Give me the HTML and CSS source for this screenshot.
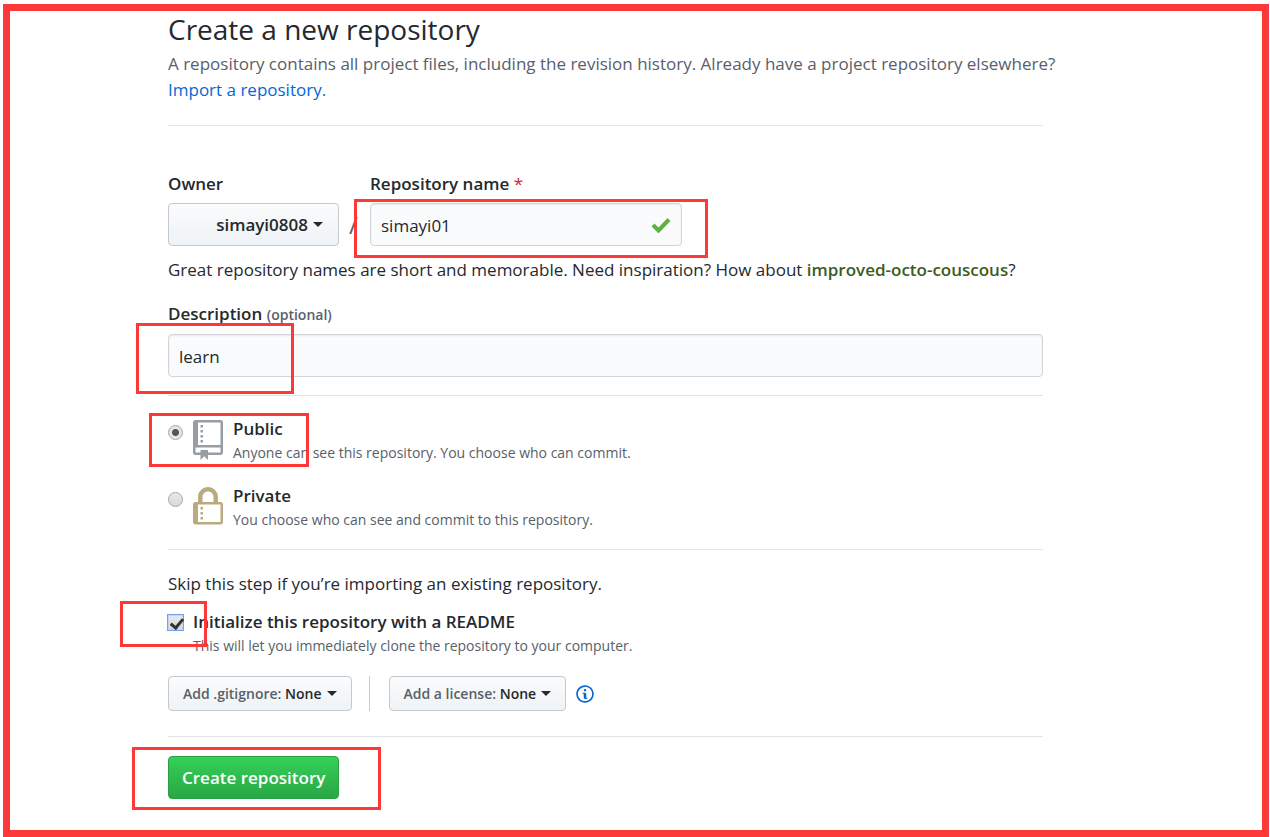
FILE: index.html
```html
<!DOCTYPE html>
<html lang="en">
<head>
	<meta charset="utf-8">
	<title>Create a New Repository</title>
	<link rel="stylesheet" href="styles.css">
</head>
<body>
<div class="frame">
	<main class="content">
		<header class="subhead">
			<h1>Create a new repository</h1>
			<p>A repository contains all project files, including the revision history. Already have a project repository elsewhere? <a href="#">Import a repository.</a></p>
		</header>

		<form>
			<div class="name-row">
				<div class="field">
					<label for="owner">Owner</label>
					<button type="button" id="owner" class="btn btn-owner" aria-haspopup="true">simayi0808<span class="caret"></span></button>
				</div>
				<span class="slash">/</span>
				<div class="field">
					<label for="repo-name">Repository name <span class="required">*</span></label>
					<div class="control">
						<input type="text" id="repo-name" class="name-input" value="simayi01">
						<svg class="check" viewBox="0 0 20 16" width="20" height="16"><path d="M2 8l5.500 5.500L18 2.500" fill="none" stroke="#5eb13c" stroke-width="4"/></svg>
						<span class="mark mark-name"></span>
					</div>
				</div>
			</div>
			<p class="note">Great repository names are short and memorable. Need inspiration? How about <strong>improved-octo-couscous</strong>?</p>

			<div class="field description">
				<label for="description">Description <span class="optional">(optional)</span></label>
				<div class="control">
					<input type="text" id="description" value="learn">
					<span class="mark mark-description"></span>
				</div>
			</div>

			<div class="section visibility">
				<div class="choice">
					<input type="radio" name="visibility" id="public" checked>
					<svg class="icon-repo" viewBox="0 0 12 16" width="30" height="40"><path fill-rule="evenodd" d="M4 9H3V8h1v1zm0-3H3v1h1V6zm0-2H3v1h1V4zm0-2H3v1h1V2zm8-1v12c0 .55-.45 1-1 1H6v2l-1.500-1.500L3 16v-2H1c-.55 0-1-.45-1-1V1c0-.55.45-1 1-1h10c.55 0 1 .45 1 1zm-1 10H1v2h2v-1h3v1h5v-2zm0-10H2v9h9V1z"/></svg>
					<div>
						<label for="public">Public</label>
						<p class="hint">Anyone can see this repository. You choose who can commit.</p>
					</div>
					<span class="mark mark-public"></span>
				</div>
				<div class="choice">
					<input type="radio" name="visibility" id="private">
					<svg class="icon-lock" viewBox="0 0 12 16" width="30" height="40"><path fill-rule="evenodd" d="M4 13H3v-1h1v1zm8-6v7c0 .55-.45 1-1 1H1c-.55 0-1-.45-1-1V7c0-.55.45-1 1-1h1V4c0-2.200 1.800-4 4-4s4 1.800 4 4v2h1c.55 0 1 .45 1 1zM3.800 6h4.410V4c0-1.220-.98-2.200-2.200-2.200-1.220 0-2.200.98-2.200 2.200v2H3.800zM11 7H2v7h9V7zM4 8H3v1h1V8zm0 2H3v1h1v-1z"/></svg>
					<div>
						<label for="private">Private</label>
						<p class="hint">You choose who can see and commit to this repository.</p>
					</div>
				</div>
			</div>

			<div class="section init">
				<p>Skip this step if you’re importing an existing repository.</p>
				<div class="choice">
					<input type="checkbox" id="readme" checked>
					<div>
						<label for="readme">Initialize this repository with a README</label>
						<p class="hint">This will let you immediately clone the repository to your computer.</p>
					</div>
					<span class="mark mark-readme"></span>
				</div>
				<div class="templates">
					<button type="button" class="btn btn-sm" aria-haspopup="true"><i>Add .gitignore:</i> None<span class="caret"></span></button>
					<span class="divider"></span>
					<button type="button" class="btn btn-sm" aria-haspopup="true"><i>Add a license:</i> None<span class="caret"></span></button>
					<a href="#" class="info" aria-label="About licenses"><svg viewBox="0 0 14 16" width="18" height="20"><path fill-rule="evenodd" d="M6.300 5.690a.942.942 0 0 1-.28-.7c0-.28.09-.52.28-.7.19-.18.42-.28.7-.28.28 0 .52.09.7.28.18.19.28.42.28.7 0 .28-.09.52-.28.7a1 1 0 0 1-.7.3c-.28 0-.52-.11-.7-.3zM8 7.990c-.02-.25-.11-.48-.31-.69-.2-.19-.42-.3-.69-.31H6c-.27.02-.48.13-.69.31-.2.2-.3.44-.31.69h1v3c.02.27.11.5.31.69.2.2.42.31.69.31h1c.27 0 .48-.11.69-.31.2-.19.3-.42.31-.69H8V7.980v.01zM7 2.300c-3.140 0-5.700 2.540-5.700 5.680 0 3.140 2.560 5.700 5.700 5.700s5.700-2.550 5.700-5.700c0-3.150-2.560-5.690-5.700-5.690v.01zM7 .98c3.860 0 7 3.140 7 7s-3.140 7-7 7-7-3.120-7-7 3.140-7 7-7z"/></svg></a>
				</div>
			</div>

			<div class="section submit">
				<div class="control">
					<button type="submit" class="btn btn-primary">Create repository</button>
					<span class="mark mark-submit"></span>
				</div>
			</div>
		</form>
	</main>
</div>
</body>
</html>
```
FILE: styles.css
```css
* { box-sizing: border-box; }
body {
	margin: 0; background: white;
	font: 17px/26px "Segoe UI", "Open Sans", "Noto Sans", sans-serif;
	color: #24292e;
}
h1, p { margin: 0; }
h1 { font-size: 28px; line-height: 36px; font-weight: 400; }
a { color: #0366d6; text-decoration: none; }
svg { display: block; flex: none; }
label { font-weight: 600; }

.frame {
	margin: 4px 1px 0 3px;
	border: 7px solid #fc3838;
	padding: 0 158px 31px;
}
.content { max-width: 875px; }
.subhead {
	padding-bottom: 22px;
	border-bottom: 1px solid #e1e4e8;
	margin-bottom: 45px;
}
/* the intro may run a little past the rule below it */
.subhead p { color: #586069; margin: 4px -32px 0 0; }

/* text fields */
.name-row { display: flex; align-items: flex-end; }
.field { display: flex; flex-direction: column; gap: 6px; }
.control { position: relative; }
input[type=text] {
	display: block;
	width: 100%; height: 43px;
	padding: 2px 10px 0;
	border: 1px solid #d1d5da;
	border-radius: 4px;
	background: #fafbfc;
	box-shadow: inset 0 1px 2px rgba(27,31,35,.08);
	font: inherit; color: inherit;
}
.name-row .name-input { width: 312px; }
.slash { width: 31px; padding-left: 10px; line-height: 43px; font-size: 24px; color: #586069; }
.check { position: absolute; right: 11px; top: 14px; }
.required { color: #cb2431; font-weight: 400; }
.optional { font-size: 14px; color: #586069; }
.note { margin: 11px 0 18px; }
.note strong { color: #3c5c1e; font-weight: 600; }

/* buttons */
.btn {
	display: inline-flex; align-items: center; justify-content: center;
	height: 43px;
	padding: 0 15px;
	border: 1px solid #c5c9cd;
	border-radius: 4px;
	background: linear-gradient(#fafbfc, #eff3f6);
	font: 600 17px/26px "Segoe UI", "Open Sans", "Noto Sans", sans-serif;
	color: #24292e;
	white-space: pre;
	cursor: pointer;
}
.btn-owner { width: 171px; justify-content: flex-end; }
.btn-sm { height: 35px; padding: 0 14px; font-size: 14px; }
.btn-sm i { font-style: normal; color: #586069; }
.btn-primary {
	padding: 0 13px;
	border-color: #28a042;
	background: linear-gradient(#34d058, #28a745);
	color: white;
}
.caret {
	margin-left: 5px;
	border: 5px solid transparent;
	border-top-color: #24292e;
	border-bottom: 0;
}

.section { border-top: 1px solid #e1e4e8; margin-top: 18px; }

/* radio and tick box rows */
.choice { display: flex; position: relative; }
.choice label { display: block; }
.hint { font-size: 14px; line-height: 22px; color: #586069; }
.visibility { padding-top: 20px; display: grid; gap: 19px; }
.visibility svg { margin: 4px 10px 0; height: 40px; }
.icon-repo { fill: #959da5; }
.icon-lock { fill: #b9aa80; }
input[type=radio], input[type=checkbox] {
	appearance: none;
	flex: none;
	width: 15px; height: 15px;
	margin: 9px 0 0;
	border: 1px solid #a8a8a8;
	background: linear-gradient(#e8e8e8, #d8d8d8);
}
input[type=radio] { border-radius: 50%; }
input[type=radio]:checked { background: radial-gradient(circle, #555 0 3px, #e6e6e6 4px); }
input[type=checkbox] {
	position: relative;
	margin: 6px 10px 0 0;
	border-color: #c4d6f2;
	outline: 1px solid #6fa3f0;
}
input[type=checkbox]::after {
	content: "";
	position: absolute;
	left: 4px; top: 0;
	width: 5px; height: 10px;
	border: solid #333;
	border-width: 0 3px 3px 0;
	transform: rotate(40deg);
}

.init { padding-top: 21px; }
.init .choice { margin-top: 12px; }
.templates { display: flex; align-items: center; margin-top: 19px; }
.divider { width: 1px; height: 35px; margin: 0 19px 0 17px; background: #c9cdd1; }
.info { margin-left: 10px; fill: #0366d6; }
.submit { margin-top: 25px; padding-top: 19px; }

/* red highlight boxes over the form */
.mark { position: absolute; border: 3px solid #fc3838; pointer-events: none; }
.mark-name { left: -16px; right: -26px; top: -4px; bottom: -12px; }
.mark-description { left: -32px; top: -11px; width: 158px; height: 71px; }
.mark-public { left: -19px; top: -3px; width: 160px; height: 54px; }
.mark-readme { left: -48px; top: -8px; width: 87px; height: 46px; }
.mark-submit { left: -36px; top: -9px; width: 249px; height: 63px; }
```
